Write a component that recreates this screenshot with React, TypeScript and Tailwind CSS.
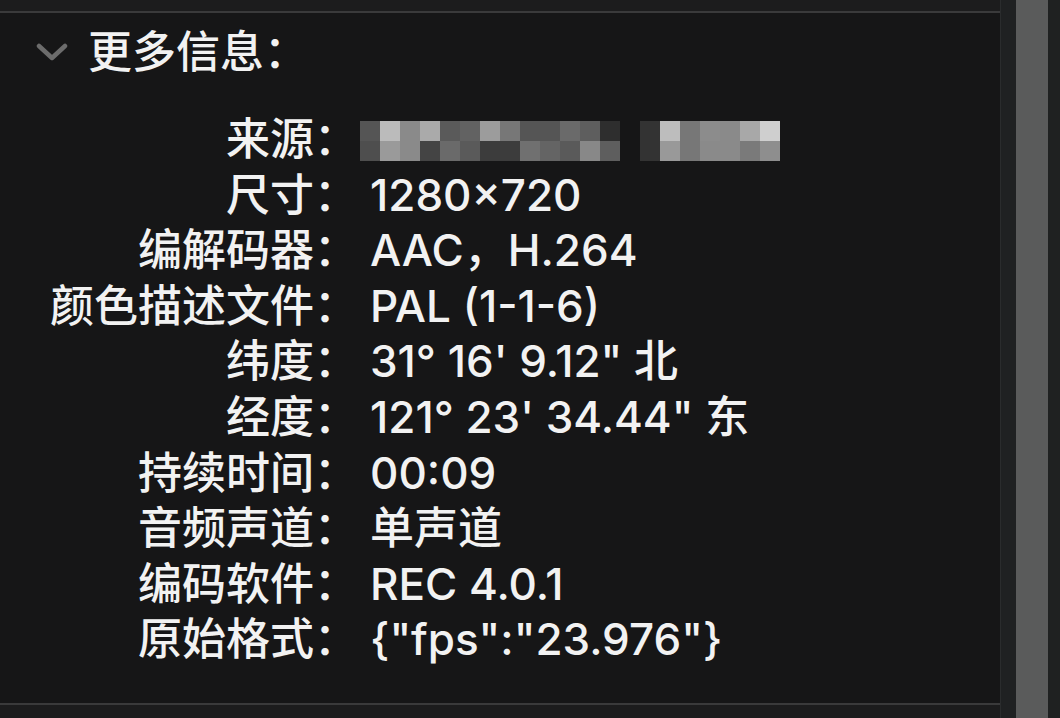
import React from "react";

const rows: [string, React.ReactNode][] = [
  ["来源：", null],
  ["尺寸：", "1280×720"],
  ["编解码器：", "AAC，H.264"],
  ["颜色描述文件：", "PAL (1-1-6)"],
  ["纬度：", "31° 16' 9.12\" 北"],
  ["经度：", "121° 23' 34.44\" 东"],
  ["持续时间：", "00:09"],
  ["音频声道：", "单声道"],
  ["编码软件：", "REC 4.0.1"],
  ["原始格式：", "{\"fps\":\"23.976\"}"],
];

// blurred source path, drawn as grey mosaic blocks
const topA = ["#555", "#bbb", "#8a8a8a", "#aaa", "#5a5a5a", "#626262", "#9c9c9c", "#777", "#555", "#555", "#6a6a6a", "#5e5e5e", "#2e2e2e"];
const botA = ["#4e4e4e", "#9a9a9a", "#8a8a8a", "#444", "#6a6a6a", "#5a5a5a", "#3c3c3c", "#3c3c3c", "#707070", "#646464", "#5a5a5a", "#888", "#5e5e5e"];
const topB = ["#333", "#bdbdbd", "#777", "#8c8c8c", "#8a8a8a", "#a8a8a8", "#cfcfcf"];
const botB = ["#333", "#999", "#777", "#8a8a8a", "#8a8a8a", "#7a7a7a", "#8e8e8e"];

function Mosaic({ top, bot }: { top: string[]; bot: string[] }) {
  return (
    <div className="flex flex-col">
      <div className="flex">
        {top.map((c, i) => (
          <div key={i} className="w-[20px] h-[20px]" style={{ background: c }} />
        ))}
      </div>
      <div className="flex">
        {bot.map((c, i) => (
          <div key={i} className="w-[20px] h-[20px]" style={{ background: c }} />
        ))}
      </div>
    </div>
  );
}

export default function App() {
  return (
    <div
      className="w-[1060px] h-[718px] overflow-hidden flex bg-[#1a1a1b] text-[#f2f2f2]"
      style={{ fontFamily: "Inter, 'Noto Sans CJK SC', sans-serif" }}
    >
      <div className="w-[1000px] flex flex-col">
        <div className="h-[11px] shrink-0 bg-[#1c1c1d]" />
        <div className="h-[2px] shrink-0 bg-[#3a3a3b]" />
        <div className="flex-1 bg-[#161617] flex flex-col">
          <div className="flex items-center h-[78px] shrink-0">
            <svg width="32" height="18" viewBox="0 0 32 18" className="ml-[36px] mr-[20px]">
              <path d="M3 3 L16 15 L29 3" fill="none" stroke="#6c6c6c" strokeWidth="4.5" strokeLinecap="round" strokeLinejoin="round" />
            </svg>
            <span className="text-[44px] font-medium">更多信息：</span>
          </div>
          <div className="grid grid-cols-[358px_1fr] gap-x-[12px] pt-[21px] text-[44px] font-medium leading-[55.6px]">
            {rows.map(([k, v]) => (
              <React.Fragment key={k}>
                <div className="text-right whitespace-nowrap">{k}</div>
                <div className="whitespace-nowrap flex items-center">
                  {v === null ? (
                    <div className="flex gap-[20px] -ml-[10px] pt-[2px]">
                      <Mosaic top={topA} bot={botA} />
                      <Mosaic top={topB} bot={botB} />
                    </div>
                  ) : (
                    v
                  )}
                </div>
              </React.Fragment>
            ))}
          </div>
        </div>
        <div className="h-[2px] shrink-0 bg-[#3a3a3b]" />
        <div className="h-[13px] shrink-0 bg-[#1c1c1d]" />
      </div>
      <div className="w-[16px] bg-[#1f2122] border-l border-[#2a2c2d]" />
      <div className="w-[32px] bg-[#5a5b5b]" />
      <div className="w-[12px] bg-[#1f2121]" />
    </div>
  );
}
